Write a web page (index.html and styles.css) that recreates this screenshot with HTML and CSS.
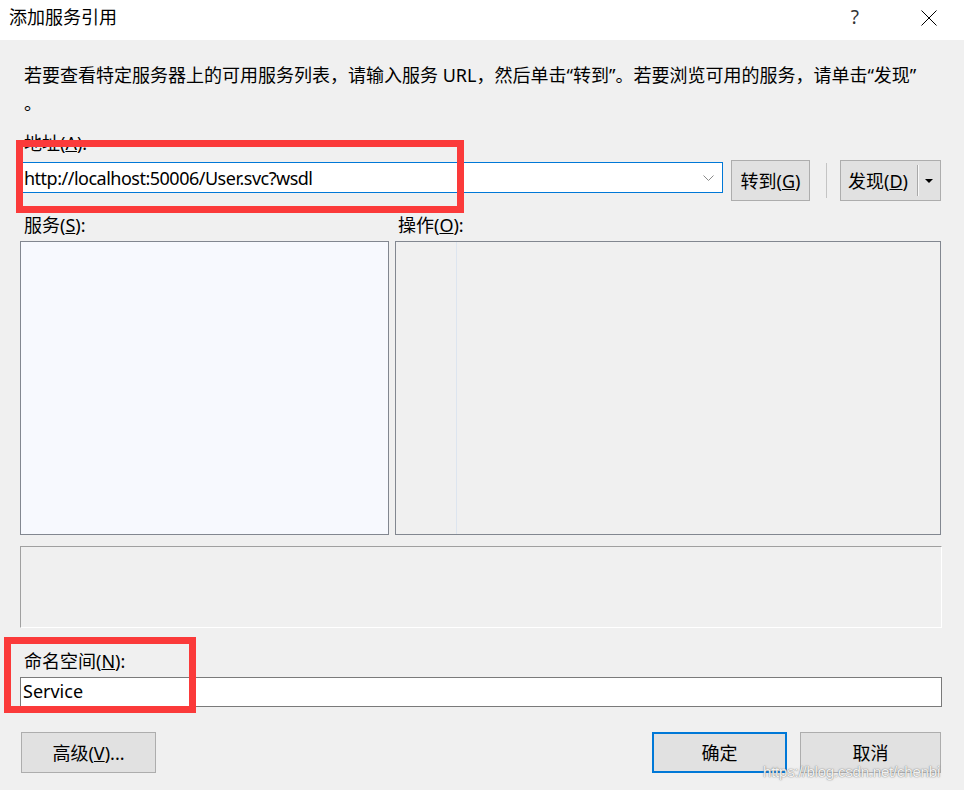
FILE: index.html
```html
<!DOCTYPE html>
<html lang="zh-CN">
<head>
<meta charset="utf-8">
<title>添加服务引用</title>
<link rel="stylesheet" href="styles.css">
</head>
<body>
<div class="dialog">
  <div class="titlebar">
    <span class="title">添加服务引用</span>
    <span class="help">?</span>
    <span class="close">
      <svg width="16" height="16" viewBox="0 0 16 16"><path d="M0.5 0.5 L15.5 15.5 M15.5 0.5 L0.5 15.5" stroke="#000" stroke-width="1" fill="none"/></svg>
    </span>
  </div>
  <div class="content">
    <p class="desc">若要查看特定服务器上的可用服务列表，请输入服务 URL，然后单击“转到”。若要浏览可用的服务，请单击“发现”<br>。</p>
    <div class="label">地址(<u>A</u>):</div>
    <div class="addr-row">
      <div class="combo">
        <span class="combo-text">http://localhost:50006/User.svc?wsdl</span>
        <svg class="chev" width="11" height="7" viewBox="0 0 11 7"><path d="M0.5 0.5 L5.5 5.5 L10.5 0.5" stroke="#8a8a8a" stroke-width="1" fill="none"/></svg>
      </div>
      <div class="btn go">转到(<u>G</u>)</div>
      <span class="vsep"></span>
      <div class="btn split">
        <span class="split-label">发现(<u>D</u>)</span>
        <span class="split-sep"></span>
        <span class="split-arrow"><svg width="8" height="4" viewBox="0 0 8 4"><path d="M0 0 H8 L4 4 Z" fill="#000"/></svg></span>
      </div>
    </div>
    <div class="lists-head">
      <span class="svc-label">服务(<u>S</u>):</span>
      <span class="ops-label">操作(<u>O</u>):</span>
    </div>
    <div class="lists">
      <div class="svc-list"></div>
      <div class="ops-list"><div class="ops-col"></div></div>
    </div>
    <div class="info"></div>
    <div class="label ns-label">命名空间(<u>N</u>):</div>
    <div class="ns-input">Service</div>
    <div class="footer">
      <div class="btn adv">高级(<u>V</u>)...</div>
      <div class="spacer"></div>
      <div class="btn primary">确定</div>
      <div class="btn cancel">取消</div>
    </div>
  </div>
  <div class="mark mark-addr"></div>
  <div class="mark mark-ns"></div>
  <div class="watermark">https://blog.csdn.net/chenbi</div>
</div>
</body>
</html>
```

FILE: styles.css
```css
* { box-sizing: border-box; }
html, body { margin: 0; padding: 0; }
body {
  width: 964px;
  height: 790px;
  overflow: hidden;
  background: #f0f0f0;
  font-family: "Noto Sans", "Noto Sans CJK SC", sans-serif;
  font-size: 18px;
  color: #000;
}
.dialog {
  position: relative;
  width: 964px;
  height: 790px;
  background: #f0f0f0;
}
.titlebar {
  height: 40px;
  background: #fff;
  display: flex;
  align-items: center;
  padding-left: 9px;
}
.title {
  flex: 1;
  line-height: 24px;
  margin-top: -6px;
}
.help {
  font-family: "Noto Sans", sans-serif;
  font-size: 19px;
  color: #333;
  margin-right: 62px;
  margin-top: -6px;
}
.close {
  display: flex;
  margin-right: 27px;
  margin-top: -5px;
}
.content {
  padding: 21px 22px 0 20px;
}
.desc {
  margin: 0 0 0 4px;
  line-height: 28px;
}
.label {
  margin: 14px 0 0 4px;
  line-height: 24px;
}
.addr-row {
  display: flex;
  align-items: flex-start;
  margin-top: 5px;
  height: 41px;
}
.combo {
  flex: 1;
  height: 31px;
  margin-top: 2px;
  border: 1px solid #0078d7;
  background: #fff;
  display: flex;
  align-items: center;
  padding: 0 0 0 3px;
}
.combo-text { flex: 1; line-height: 28px; letter-spacing: -0.5px; }
.chev { margin-right: 8px; margin-top: 1px; }
.btn {
  background: #e1e1e1;
  border: 1px solid #adadad;
  height: 41px;
  display: flex;
  align-items: center;
  justify-content: center;
  line-height: 24px;
}
.go {
  width: 79px;
  margin-left: 8px;
}
.vsep {
  width: 1px;
  height: 35px;
  margin: 3px 13px 0 16px;
  background: #c4c4c4;
}
.split {
  width: 101px;
  margin-right: 1px;
  justify-content: flex-start;
  padding-left: 7px;
}
.split-sep {
  width: 1px;
  height: 31px;
  margin-left: 9px;
  background: #a8a8a8;
  box-shadow: 1px 0 0 #f8f8f8;
}
.split-arrow {
  display: flex;
  margin-left: 7px;
}
.lists-head {
  display: flex;
  margin-top: 12px;
  line-height: 24px;
}
.svc-label { width: 378px; padding-left: 4px; }
.lists {
  display: flex;
  margin-top: 4px;
  height: 294px;
  margin-right: 1px;
}
.svc-list {
  width: 369px;
  border: 1px solid #828790;
  background: #f7f9fe;
}
.ops-list {
  flex: 1;
  margin-left: 6px;
  border: 1px solid #828790;
  background: #f0f0f0;
  padding-left: 60px;
}
.ops-col {
  width: 1px;
  height: 100%;
  background: #dde5ef;
}
.info {
  margin-top: 11px;
  height: 82px;
  border: 1px solid;
  border-color: #a0a0a0 #ffffff #ffffff #a0a0a0;
  background: #f0f0f0;
}
.ns-label {
  margin-top: 21px;
}
.ns-input {
  margin-top: 4px;
  height: 30px;
  border: 1px solid #7a7a7a;
  background: #fff;
  padding-left: 2px;
  line-height: 27px;
}
.footer {
  display: flex;
  margin-top: 25px;
  margin-right: 1px;
}
.adv { width: 135px; margin-left: 1px; }
.spacer { flex: 1; }
.primary {
  width: 135px;
  border: 2px solid #0078d7;
}
.cancel {
  width: 141px;
  margin-left: 13px;
}
.mark {
  position: absolute;
  border: 7px solid #fb3a3a;
}
.mark-addr {
  left: 16px;
  top: 140px;
  width: 448px;
  height: 73px;
}
.mark-ns {
  left: 4px;
  top: 637px;
  width: 192px;
  height: 76px;
}
.watermark {
  position: absolute;
  left: 763px;
  top: 765px;
  line-height: 14px;
  font-family: "Liberation Sans", Arial, sans-serif;
  font-size: 15px;
  color: rgba(255, 255, 255, 0.92);
  text-shadow: 0 0 1px rgba(100, 100, 100, 0.9), 0 0 2px rgba(140, 140, 140, 0.6);
  letter-spacing: -0.2px;
}
```
